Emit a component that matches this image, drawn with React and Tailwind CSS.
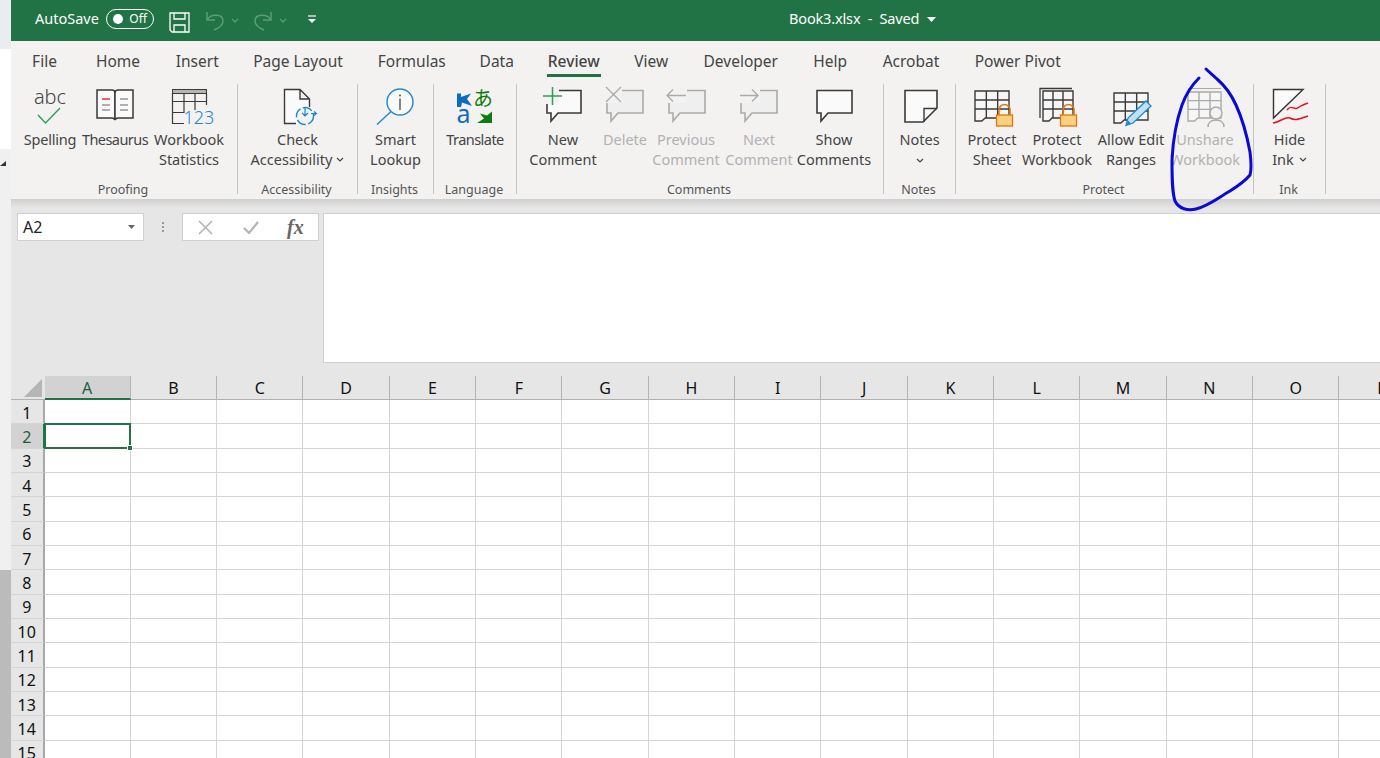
import React from "react";

const Ico = ({ c, w = 52, children }) => (
  <svg width={w} height={44} viewBox={`${c - w / 2} 86 ${w} 44`} className="shrink-0 overflow-visible" fill="none">
    {children}
  </svg>
);

const Chev = ({ className = "" }) => (
  <svg width="8" height="5" viewBox="0 0 8 5" fill="none" className={className}>
    <path d="M1 1l3 3 3-3" stroke="#444" strokeWidth="1.2" />
  </svg>
);

const Bubble = ({ x1, x2, stroke = "#3a3a3a", fill = "#fafafa" }) => (
  <path
    d={`M${x1} 90.5H${x2}V113H${x1 + 11}L${x1 + 4} 121V113H${x1}Z`}
    stroke={stroke}
    strokeWidth="1.6"
    fill={fill}
  />
);

const Sheet = ({ x, y, w, h, stroke = "#3a3a3a" }) => {
  const cw = w / 3;
  const rh = h / 3;
  return (
    <g stroke={stroke} strokeWidth="1.4">
      <path d={`M${x} ${y}H${x + w}V${y + h}H${x + w * 0.3}L${x + w * 0.2} ${y + h + 3}H${x}Z`} fill="#f6f6f6" />
      <path d={`M${x + cw} ${y}V${y + h}M${x + 2 * cw} ${y}V${y + h}M${x} ${y + rh}H${x + w}M${x} ${y + 2 * rh}H${x + w}`} />
    </g>
  );
};

const Lock = ({ x }) => (
  <g>
    <path d={`M${x + 3} 115v-5a5.5 5.5 0 0 1 11 0v5`} stroke="#e8720c" strokeWidth="1.5" />
    <rect x={x + 0.5} y="115" width="16" height="11" fill="#f8d27f" stroke="#e8720c" strokeWidth="1.3" />
  </g>
);

const Btn = ({ w, label, disabled, icon, tight = "" }) => (
  <div className="flex flex-col items-center shrink-0" style={{ width: w }}>
    <div className="h-[44px] mt-[2px] flex justify-center">{icon}</div>
    <div className={`text-center text-[14.5px] whitespace-nowrap -mt-[0.5px] ${tight} ${disabled ? "text-[#b1b1b1]" : "text-[#444]"}`}>
      {label.map((l, i) => (
        <div key={i} className="flex items-center justify-center h-[20px]">
          {l}
        </div>
      ))}
    </div>
  </div>
);

const Group = ({ w, pl = 0, title, children }) => (
  <div className="flex flex-col shrink-0 h-[110px] border-r border-[#c4c4c4]" style={{ width: w }}>
    <div className="flex h-[88px] shrink-0" style={{ paddingLeft: pl }}>
      {children}
    </div>
    <div className="text-center text-[12.5px] leading-[18px] mt-[9px] pr-[2px] text-[#555]">{title}</div>
  </div>
);

const tabs = [
  ["File", 65],
  ["Home", 82],
  ["Insert", 76.5],
  ["Page Layout", 125],
  ["Formulas", 102.5],
  ["Data", 67.5],
  ["Review", 86.5],
  ["View", 68.5],
  ["Developer", 110.5],
  ["Help", 68.5],
  ["Acrobat", 93],
  ["Power Pivot", 120.5],
];

const cols = "ABCDEFGHIJKLMNOP".split("");
const rows = Array.from({ length: 15 }, (_, i) => i + 1);

export default function App() {
  return (
    <div
      className="relative flex w-[1380px] h-[758px] overflow-hidden bg-white text-[#444]"
      style={{ fontFamily: '"Noto Sans", "Open Sans", sans-serif' }}
    >
      {/* window behind, left edge */}
      <div className="w-[11px] shrink-0 flex flex-col">
        <div className="h-[49px] bg-[#e9edf2]" />
        <div className="h-[100px] bg-white" />
        <div className="h-[421px] bg-[#f0f0f0] pt-[12px]">
          <div className="w-0 h-0 border-l-[6px] border-r-[0px] border-b-[5px] border-l-transparent border-b-[#333]" />
        </div>
        <div className="flex-1 bg-[#bbbbbb]" />
      </div>

      <div className="w-[1369px] shrink-0 flex flex-col">
        {/* Title bar */}
        <div className="h-[41px] bg-[#217346] flex items-center text-white shrink-0 text-[14.5px] pb-[3px]">
          <span className="ml-[24px] w-[71px] whitespace-nowrap">AutoSave</span>
          <div className="w-[48px] h-[20px] rounded-full border border-white flex items-center pl-[6px] pr-[6px] justify-between">
            <span className="w-[10px] h-[10px] rounded-full bg-white" />
            <span className="text-[12px] leading-none">Off</span>
          </div>
          <svg width="21" height="21" viewBox="0 0 21 21" fill="none" stroke="#fff" strokeWidth="1.3" className="ml-[15px] mt-[6px]">
            <path d="M1 1H20V20H3L1 18Z" />
            <path d="M5 1V7H16V1M5 20V13H16V20" />
          </svg>
          <svg width="18" height="20" viewBox="0 0 18 20" fill="none" stroke="#5f9c7c" strokeWidth="1.4" className="ml-[16px] mt-[4px]">
            <path d="M1 1V9H9" />
            <path d="M1 9C4 3 17 2 17 10C17 14 13 17 8 19" />
          </svg>
          <svg width="8" height="5" viewBox="0 0 8 5" fill="none" className="ml-[7px] mt-[2px]">
            <path d="M1 1l3 3 3-3" stroke="#5f9c7c" strokeWidth="1.2" />
          </svg>
          <svg width="18" height="20" viewBox="0 0 18 20" fill="none" stroke="#5f9c7c" strokeWidth="1.4" className="ml-[15px] mt-[4px]">
            <path d="M17 1V9H9" />
            <path d="M17 9C14 3 1 2 1 10C1 14 5 17 10 19" />
          </svg>
          <svg width="8" height="5" viewBox="0 0 8 5" fill="none" className="ml-[7px] mt-[2px]">
            <path d="M1 1l3 3 3-3" stroke="#5f9c7c" strokeWidth="1.2" />
          </svg>
          <svg width="10" height="9" viewBox="0 0 10 9" className="ml-[20px]">
            <path d="M1 1H9" stroke="#fff" strokeWidth="1.2" />
            <path d="M1 4H9L5 8Z" fill="#fff" />
          </svg>
          <span className="ml-[472px] whitespace-nowrap tracking-[-0.15px]">Book3.xlsx&nbsp; -&nbsp; Saved</span>
          <svg width="9" height="5" viewBox="0 0 9 5" className="ml-[8px]">
            <path d="M0 0H9L4.5 5Z" fill="#fff" />
          </svg>
        </div>

        {/* Ribbon */}
        <div className="h-[158px] bg-[#f3f2f1] shrink-0 flex flex-col">
          <div className="h-[43px] flex pl-[1px] shrink-0">
            {tabs.map(([t, w]) => (
              <div key={t} style={{ width: w }} className="relative text-center pt-[9px] text-[15.5px] leading-[22px] text-[#444] whitespace-nowrap shrink-0">
                <span className={t === "Review" ? "font-medium" : ""}>{t}</span>
                {t === "Review" && <div className="absolute left-[16px] right-[16px] top-[33px] h-[3px] bg-[#217346]" />}
              </div>
            ))}
          </div>
          <div className="flex h-[110px]">
            <Group w={227} pl={9} title="Proofing">
              <Btn
                w={60}
                tight="tracking-[-0.2px]"
                label={["Spelling"]}
                icon={
                  <div className="relative w-[40px] h-[44px]">
                    <div className="absolute left-0 right-0 top-[-1px] text-center text-[20px] leading-[24px] font-light text-[#444]">abc</div>
                    <svg width="40" height="44" viewBox="30 86 40 44" fill="none" className="absolute left-0 top-0">
                      <path d="M38 115l7.5 8L60 108" stroke="#2f9e56" strokeWidth="1.4" />
                    </svg>
                  </div>
                }
              />
              <Btn
                w={70}
                tight="tracking-[-0.55px]"
                label={["Thesaurus"]}
                icon={
                  <Ico c={115}>
                    <path d="M97 90H112Q115 90 115 93V120Q114 118 112 118H97Z" fill="#fafafa" stroke="#3a3a3a" strokeWidth="1.5" />
                    <path d="M133 90H118Q115 90 115 93V120Q116 118 118 118H133Z" fill="#fafafa" stroke="#3a3a3a" strokeWidth="1.5" />
                    <path d="M102 99H110" stroke="#e81123" strokeWidth="1.3" />
                    <path d="M102 105H110M102 110H110M120 99H128M120 105H128M120 110H128" stroke="#666" strokeWidth="1.2" />
                  </Ico>
                }
              />
              <Btn
                w={78}
                label={["Workbook", "Statistics"]}
                icon={
                  <Ico c={189}>
                    <rect x="172.5" y="89.5" width="34" height="4" fill="#b4b4b4" stroke="#3a3a3a" />
                    <path d="M172.5 93V123.500H184M184 93V113M195 93V110M206.500 93V105M172.500 101.500H206.500M172.500 112.500H184" stroke="#3a3a3a" strokeWidth="1.2" />
                    <text x="183.500" y="124" fontSize="18" fontWeight="300" fill="#1e88d2" fontFamily="Noto Sans">123</text>
                  </Ico>
                }
              />
            </Group>
            <Group w={120} title="Accessibility">
              <Btn
                w={119}
                label={["Check", <>Accessibility<Chev className="ml-[4px]" /></>]}
                icon={
                  <Ico c={298}>
                    <path d="M296 123.500H284.500V89.500H300L309.500 99V107M300 89.500V99H309.500" fill="#fafafa" stroke="#3a3a3a" strokeWidth="1.4" />
                    <circle cx="305" cy="116" r="8.500" stroke="#1e88d2" strokeWidth="1.4" strokeDasharray="10 2.500" fill="#f3f2f1" />
                    <path d="M305 108V116M302 113l3 3 3-3M311 113.500h5M314 111.500l2.500 2-2.500 2" stroke="#1e88d2" strokeWidth="1.2" />
                  </Ico>
                }
              />
            </Group>
            <Group w={76} title="Insights">
              <Btn
                w={75}
                label={["Smart", "Lookup"]}
                icon={
                  <Ico c={396}>
                    <circle cx="400" cy="102" r="13" stroke="#1e88d2" strokeWidth="1.4" fill="#fbfbfb" />
                    <path d="M391 111.500L377 124.500" stroke="#1e88d2" strokeWidth="1.4" />
                    <path d="M400 98.500V110" stroke="#444" strokeWidth="1.3" />
                    <circle cx="400" cy="95.500" r="0.900" fill="#444" />
                  </Ico>
                }
              />
            </Group>
            <Group w={83} title="Language">
              <Btn
                w={82}
                tight="tracking-[-0.55px]"
                label={["Translate"]}
                icon={
                  <Ico c={475}>
                    <path d="M457 93.500H461V97L471 93.500L467 99L472 106L462 102.500L461 107H457Z" fill="#0f6cbd" />
                    <text x="456.500" y="123" fontSize="25" fill="#0f6cbd" fontFamily="Noto Sans">a</text>
                    <text x="473" y="105.500" fontSize="20" fill="#107c10" fontFamily="Noto Sans CJK JP">あ</text>
                    <path d="M492 111.500V123H477L484 118.500L480 113.500L487 115.500Z" fill="#107c10" />
                  </Ico>
                }
              />
            </Group>
            <Group w={367} pl={10} title="Comments">
              <Btn
                w={72}
                label={["New", "Comment"]}
                icon={
                  <Ico c={563}>
                    <Bubble x1={547} x2={581} />
                    <rect x="544" y="87" width="15" height="17" fill="#f3f2f1" />
                    <path d="M552.500 87V105M543 96H562" stroke="#2f9e56" strokeWidth="1.5" />
                  </Ico>
                }
              />
              <Btn
                w={52}
                disabled
                label={["Delete"]}
                icon={
                  <Ico c={625}>
                    <Bubble x1={607} x2={643} stroke="#aaa" fill="#efefef" />
                    <rect x="605" y="86" width="17" height="17" fill="#f3f2f1" />
                    <path d="M606 87L621 102M621 87L606 102" stroke="#aaa" strokeWidth="1.3" />
                  </Ico>
                }
              />
              <Btn
                w={70}
                disabled
                label={["Previous", "Comment"]}
                icon={
                  <Ico c={686}>
                    <Bubble x1={669} x2={705} stroke="#aaa" fill="#efefef" />
                    <rect x="666" y="88" width="21" height="15" fill="#f3f2f1" />
                    <path d="M667 95.500H686M673 89.500L667 95.500L673 101.500" stroke="#aaa" strokeWidth="1.3" />
                  </Ico>
                }
              />
              <Btn
                w={76}
                disabled
                label={["Next", "Comment"]}
                icon={
                  <Ico c={759}>
                    <Bubble x1={741} x2={777} stroke="#aaa" fill="#efefef" />
                    <rect x="739" y="88" width="21" height="15" fill="#f3f2f1" />
                    <path d="M740 95.500H758M752 89.500L758 95.500L752 101.500" stroke="#aaa" strokeWidth="1.3" />
                  </Ico>
                }
              />
              <Btn
                w={74}
                label={["Show", "Comments"]}
                icon={
                  <Ico c={834}>
                    <Bubble x1={817} x2={852} />
                  </Ico>
                }
              />
            </Group>
            <Group w={72} title="Notes">
              <Btn
                w={71}
                label={["Notes", <Chev className="mt-[1px]" />]}
                icon={
                  <Ico c={919}>
                    <path d="M904 90.500H936V108L922 122H904Z" fill="#fafafa" stroke="#3a3a3a" strokeWidth="1.6" />
                    <path d="M923 122V108.500H936" stroke="#3a3a3a" strokeWidth="1.4" />
                  </Ico>
                }
              />
            </Group>
            <Group w={298} pl={7} title="Protect">
              <Btn
                w={58}
                label={["Protect", "Sheet"]}
                icon={
                  <Ico c={992}>
                    <Sheet x={975} y={91} w={34} h={27} />
                    <Lock x={996} />
                  </Ico>
                }
              />
              <Btn
                w={72}
                label={["Protect", "Workbook"]}
                icon={
                  <Ico c={1057}>
                    <path d="M1040 118V88.500H1072" stroke="#3a3a3a" strokeWidth="1.3" />
                    <Sheet x={1043} y={91} w={30} h={27} />
                    <Lock x={1060} />
                  </Ico>
                }
              />
              <Btn
                w={76}
                label={["Allow Edit", "Ranges"]}
                icon={
                  <Ico c={1131}>
                    <Sheet x={1114} y={93} w={34} h={27} />
                    <path d="M1126 125.500L1128 118L1146 101L1151 106L1133 123Z" fill="#bfe0f5" stroke="#1e88d2" strokeWidth="1.3" />
                    <path d="M1126 125.500L1128 120.500L1131 123.500Z" fill="#1e88d2" />
                  </Ico>
                }
              />
              <Btn
                w={72}
                disabled
                label={["Unshare", "Workbook"]}
                icon={
                  <Ico c={1205}>
                    <path d="M1188 88.500H1221" stroke="#aaa" strokeWidth="1.2" />
                    <Sheet x={1188} y={92} w={33} h={26} stroke="#aaa" />
                    <circle cx="1216" cy="113" r="6" fill="#f3f2f1" stroke="#aaa" strokeWidth="1.4" />
                    <path d="M1208 127C1208 122 1212 120 1216 120C1220 120 1224 122 1224 127" fill="#f3f2f1" stroke="#aaa" strokeWidth="1.4" />
                  </Ico>
                }
              />
            </Group>
            <Group w={72} title="Ink">
              <Btn
                w={71}
                label={["Hide", <>Ink<Chev className="ml-[5px]" /></>]}
                icon={
                  <Ico c={1289}>
                    <path d="M1272.500 89.500H1302L1272.500 118Z" fill="#fafafa" stroke="#333" strokeWidth="1.4" />
                    <path d="M1272 123C1280 122 1284 116 1289 118C1294 121 1298 119 1307 116" stroke="#e81123" strokeWidth="1.5" />
                    <path d="M1286 110C1291 103 1293 112 1298 107C1301 105 1304 104 1307 103" stroke="#e81123" strokeWidth="1.5" />
                  </Ico>
                }
              />
            </Group>
          </div>
        </div>

        {/* Formula area */}
        <div className="h-[177px] shrink-0 bg-[#e6e6e6] flex flex-col">
          <div className="h-[9px] shrink-0 bg-gradient-to-b from-[#cfcfcf] to-[#e6e6e6]" />
          <div className="flex items-start pt-[5px] flex-1">
            <div className="ml-[6px] w-[127px] h-[28px] bg-white border border-[#d0d0d0] flex items-center justify-between pl-[5px] pr-[8px] text-[16px] text-[#222]">
              A2
              <svg width="7" height="4" viewBox="0 0 7 4">
                <path d="M0 0H7L3.500 4Z" fill="#666" />
              </svg>
            </div>
            <div className="w-[38px] h-[28px] flex flex-col items-center justify-center gap-[2px]">
              <span className="w-[2px] h-[2px] bg-[#999]" />
              <span className="w-[2px] h-[2px] bg-[#999]" />
              <span className="w-[2px] h-[2px] bg-[#999]" />
            </div>
            <div className="w-[137px] h-[28px] bg-white border border-[#d0d0d0] flex items-center pl-[15px]">
              <svg width="15" height="15" viewBox="0 0 15 15" fill="none">
                <path d="M1 1L14 14M14 1L1 14" stroke="#b4b4b4" strokeWidth="1.6" />
              </svg>
              <svg width="16" height="13" viewBox="0 0 16 13" fill="none" className="ml-[30px]">
                <path d="M1 7L6 12L15 1" stroke="#b4b4b4" strokeWidth="2.2" />
              </svg>
              <span className="ml-[28px] text-[20px] italic font-semibold text-[#666] leading-none" style={{ fontFamily: '"Liberation Serif", serif' }}>
                fx
              </span>
            </div>
            <div className="ml-[4px] flex-1 h-[150px] bg-white border border-[#d0d0d0] border-r-0" />
          </div>
        </div>

        {/* Sheet grid */}
        <div className="grid grid-cols-[33.5px_repeat(16,86.33px)] grid-rows-[24px_repeat(15,24.33px)] text-[16px] text-[#111] flex-1">
          <div className="bg-[#e6e6e6] flex items-end justify-end pr-[3px] pb-[2px] border-b border-[#b0b0b0]">
            <div className="w-0 h-0 border-l-[18px] border-b-[18px] border-l-transparent border-b-[#b5b5b5]" />
          </div>
          {cols.map((c) => (
            <div
              key={c}
              className={`flex items-center justify-center pt-[1px] border-r border-[#b4b4b4] ${
                c === "A" ? "bg-[#d2d2d2] border-b-2 border-b-[#217346] text-[#1d5c3a]" : "bg-[#e6e6e6] border-b border-b-[#b0b0b0]"
              }`}
            >
              {c}
            </div>
          ))}
          {rows.map((r) => (
            <React.Fragment key={r}>
              <div
                className={`flex items-center justify-center pt-[2px] border-b border-r-2 border-b-[#d4d4d4] ${
                  r === 2 ? "bg-[#d2d2d2] border-r-[#217346] text-[#1d5c3a]" : "bg-[#e6e6e6] border-r-[#a8a8a8]"
                }`}
              >
                {r}
              </div>
              {cols.map((c) => (
                <div key={c} className={`relative border-r border-b border-[#d4d4d4] bg-white ${r === 2 && c === "A" ? "z-10" : ""}`}>
                  {r === 2 && c === "A" && (
                    <div className="absolute left-[-1px] top-[-1px] right-[-1px] bottom-[-1px] border-2 border-[#217346]">
                      <div className="absolute right-[-4px] bottom-[-4px] w-[6px] h-[6px] bg-[#217346] border border-white" />
                    </div>
                  )}
                </div>
              ))}
            </React.Fragment>
          ))}
        </div>
      </div>

      {/* hand-drawn annotation over the ribbon */}
      <svg width="1380" height="758" viewBox="0 0 1380 758" fill="none" className="absolute left-0 top-0 z-20 pointer-events-none">
        <path
          d="M1199 78C1191 86 1186 94 1182 105C1176 122 1173 140 1172 160C1172 178 1172 192 1175 201C1179 209 1188 211 1196 209C1208 206 1218 198 1230 191C1238 186 1245 181 1250 175C1252 168 1251 160 1250 152C1247 136 1242 118 1236 105C1231 94 1224 85 1217 79C1213 75 1209 72 1206 69"
          stroke="#0a0ad6"
          strokeWidth="3"
          strokeLinecap="round"
        />
      </svg>
    </div>
  );
}
